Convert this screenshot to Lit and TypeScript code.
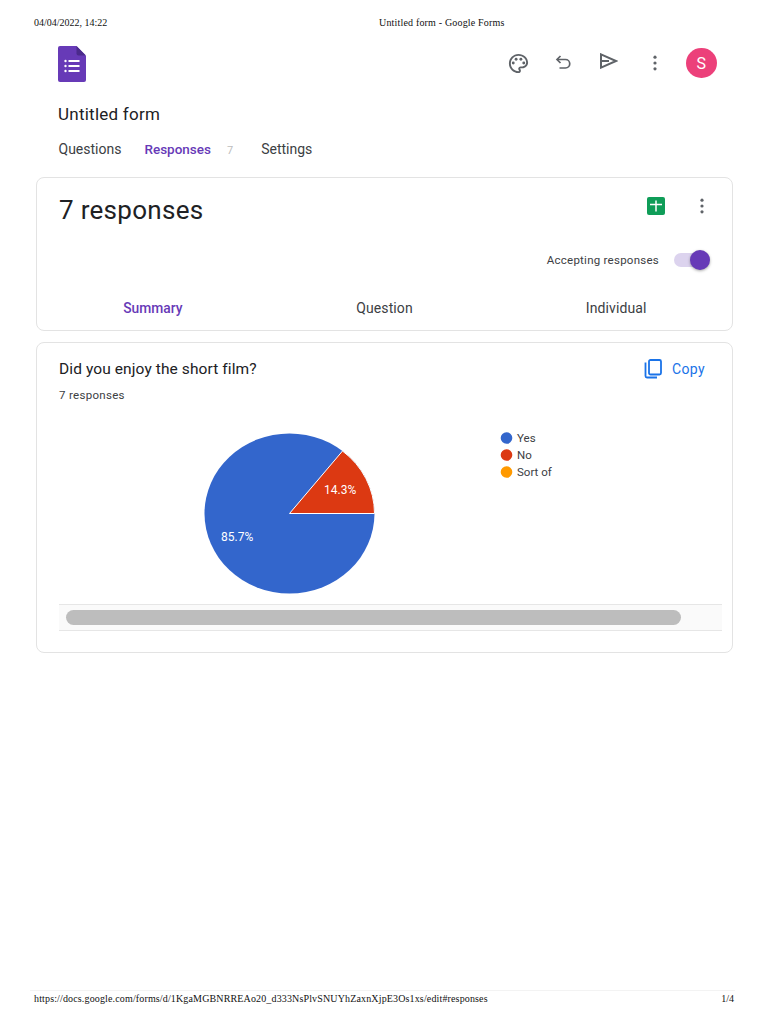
import { LitElement, html, css } from "lit";
import { customElement } from "lit/decorators.js";

const dots = html`<svg class="dots" width="4" height="16" viewBox="0 0 4 16"><circle cx="2" cy="2.2" r="1.6"/><circle cx="2" cy="8" r="1.6"/><circle cx="2" cy="13.8" r="1.6"/></svg>`;

@customElement("app-root")
export class AppRoot extends LitElement {
  static styles = css`
    :host { display: block; width: 768px; height: 1024px; background: #fff; font-family: Roboto, "Noto Sans", sans-serif; color: #202124; overflow: hidden; }
    .page { width: 768px; height: 1024px; display: flex; flex-direction: column; box-sizing: border-box; }
    .print { font-family: "Liberation Serif", serif; font-size: 10px; color: #111; }
    .head { display: grid; grid-template-columns: 345px auto; padding: 17px 34px 0; height: 29px; box-sizing: border-box; line-height: 12px; }
    .head .t { letter-spacing: 0.18px; }
    .topbar { display: flex; justify-content: space-between; align-items: flex-start; padding: 0 51.5px 0 58px; height: 53px; }
    .logo { margin-top: 17px; display: block; }
    .actions { display: flex; align-items: center; height: 36px; margin-top: 16px; }
    .actions svg { display: block; flex: none; }
    .palette { margin-right: 25.5px; }
    .undo { margin-right: 29px; }
    .send { margin-right: 35px; margin-bottom: 4px; }
    .dots { fill: #5f6368; }
    .more { margin-right: 29px; }
    .avatar { width: 30.5px; height: 30px; border-radius: 50%; background: #ec407a; color: #fff; font-size: 16px; display: flex; align-items: center; justify-content: center; }
    .title { font-size: 17px; line-height: 22px; padding: 21px 0 0 58px; letter-spacing: 0.25px; color: #202124; }
    .tabs { display: flex; align-items: baseline; padding: 14px 0 0 58.5px; font-size: 14px; line-height: 20px; color: #3c4043; height: 20px; box-sizing: content-box; }
    .tabs .on { color: #673ab7; font-weight: 500; font-size: 13.5px; margin-left: 23px; }
    .tabs .n { color: #bdbdbd; font-size: 11px; margin-left: 16px; }
    .tabs .s { margin-left: 28px; }
    .card { margin: 0 35px 0 36px; border: 1.5px solid #e3e3e3; border-radius: 8px; box-sizing: border-box; background: #fff; }
    .c1 { height: 154px; padding: 0 22px; display: flex; flex-direction: column; margin-top: 17.5px; }
    .row1 { display: flex; justify-content: space-between; align-items: flex-start; height: 67.5px; }
    .big { font-size: 26px; line-height: 32px; padding-top: 16px; letter-spacing: 0.3px; }
    .row1 .tools { display: flex; align-items: center; gap: 35px; padding: 19px 6px 0 0; }
    .sheet { width: 18px; height: 18px; border-radius: 2px; background: #0f9d58; display: block; }
    .accept { display: flex; justify-content: flex-end; align-items: center; gap: 15px; font-size: 11.5px; letter-spacing: 0.25px; color: #3c4043; height: 30px; }
    .switch { position: relative; width: 36px; height: 20px; flex: none; }
    .track { position: absolute; left: 0; top: 3px; width: 34px; height: 14px; border-radius: 7px; background: #dcd3ee; }
    .thumb { position: absolute; right: 0; top: 0; width: 20px; height: 20px; border-radius: 50%; background: #673ab7; box-shadow: 0 1px 3px rgba(0,0,0,.35); }
    .rtabs { display: grid; grid-template-columns: repeat(3, 1fr); margin: 22.5px -22px 0; font-size: 14px; letter-spacing: 0.1px; line-height: 20px; text-align: center; color: #3c4043; }
    .rtabs .on { color: #673ab7; font-weight: 500; font-size: 13.8px; letter-spacing: 0; }
    .c2 { height: 311.5px; margin-top: 11px; padding: 0 0 0 22px; }
    .qrow { display: flex; justify-content: space-between; align-items: center; padding: 14px 27px 0 0; height: 24px; box-sizing: content-box; }
    .q { font-size: 15.5px; line-height: 24px; letter-spacing: 0.1px; }
    .copy { display: flex; align-items: center; gap: 10px; color: #1a73e8; font-size: 14px; letter-spacing: 0.4px; }
    .copy svg { display: block; }
    .count { font-size: 11.5px; letter-spacing: 0.3px; color: #3c4043; line-height: 16px; margin: 6px 0 1.5px; }
    .chart { display: block; margin-left: -23px; }
    .chart text { font-family: Roboto, sans-serif; font-size: 11.5px; }
    .chart .pct { font-size: 12px; }
    .scroll { height: 27px; margin: 0 10px 0 0; border-top: 1.5px solid #e6e6e6; border-bottom: 1.5px solid #e6e6e6; background: #fafafa; box-sizing: border-box; padding: 5.5px 0 0 6.5px; }
    .bar { width: 615.5px; height: 15px; border-radius: 8px; background: #bdbdbd; }
    .spacer { flex: 1; }
    .foot { display: flex; justify-content: space-between; padding: 0 34px; height: 33px; line-height: 14px; box-sizing: border-box; }
    .foot .u { letter-spacing: 0.145px; }
    .rule { height: 1px; margin: 0 33px 0 30px; background: #f3f3f3; }
    .foot span { margin-top: 1px; }
  `;

  render() {
    return html`<div class="page">
      <div class="head print"><span>04/04/2022, 14:22</span><span class="t">Untitled form - Google Forms</span></div>
      <div class="topbar">
        <svg class="logo" width="28" height="36" viewBox="0 0 28 36">
          <path d="M2 0H18.5L28 10V34a2 2 0 0 1-2 2H2a2 2 0 0 1-2-2V2a2 2 0 0 1 2-2z" fill="#673ab7"/>
          <path d="M18.5 0L28 9.5H20.5a2 2 0 0 1-2-2z" fill="#4b2a8c"/>
          <g fill="#fff"><rect x="10.5" y="14" width="11" height="2"/><rect x="10.5" y="19" width="11" height="2"/><rect x="10.5" y="24" width="11" height="2"/><circle cx="7.5" cy="15" r="1.2"/><circle cx="7.5" cy="20" r="1.2"/><circle cx="7.5" cy="25" r="1.2"/></g>
        </svg>
        <div class="actions">
          <svg class="palette" width="23" height="23" viewBox="0 0 24 24" fill="#5f6368"><path d="M12 2C6.49 2 2 6.49 2 12s4.49 10 10 10c1.38 0 2.5-1.12 2.5-2.5 0-.61-.23-1.2-.64-1.67-.08-.1-.13-.21-.13-.33 0-.28.22-.5.5-.5H16c3.31 0 6-2.69 6-6 0-4.96-4.49-9-10-9zm4 13h-1.77c-1.38 0-2.5 1.12-2.5 2.5 0 .61.22 1.19.63 1.65.06.07.14.19.14.35 0 .28-.22.5-.5.5-4.41 0-8-3.59-8-8s3.59-8 8-8 8 3.14 8 7c0 2.21-1.79 4-4 4z"/><circle cx="6.5" cy="11.5" r="1.5"/><circle cx="9.5" cy="7.5" r="1.5"/><circle cx="14.5" cy="7.5" r="1.5"/><circle cx="17.5" cy="11.5" r="1.5"/></svg>
          <svg class="undo" width="16" height="16" viewBox="0 0 16 16" fill="none" stroke="#5f6368" stroke-width="1.7"><path d="M5.5 1L2 4.5 5.5 8"/><path d="M2.5 4.5h8a4 4 0 0 1 0 8.5H4.5"/></svg>
          <svg class="send" width="18" height="16" viewBox="0 0 18 16" fill="none" stroke="#5f6368" stroke-width="2"><path d="M1 1.4L16 8 1 14.6z"/><path d="M1 8H9"/></svg>
          <span class="more">${dots}</span>
          <div class="avatar">S</div>
        </div>
      </div>
      <div class="title">Untitled form</div>
      <div class="tabs"><span>Questions</span><span class="on">Responses</span><span class="n">7</span><span class="s">Settings</span></div>
      <section class="card c1">
        <div class="row1">
          <div class="big">7 responses</div>
          <div class="tools">
            <svg class="sheet" viewBox="0 0 18 18"><path d="M9 3.5v11M3 7.5h12" stroke="#fff" stroke-width="1.5" fill="none"/></svg>
            ${dots}
          </div>
        </div>
        <div class="accept"><span>Accepting responses</span><div class="switch"><div class="track"></div><div class="thumb"></div></div></div>
        <div class="rtabs"><span class="on">Summary</span><span>Question</span><span>Individual</span></div>
      </section>
      <section class="card c2">
        <div class="qrow"><span class="q">Did you enjoy the short film?</span>
          <span class="copy"><svg width="18" height="20" viewBox="0 0 18 20" fill="none" stroke="#1a73e8" stroke-width="1.8"><path d="M1.5 3.5V17a1.5 1.5 0 0 0 1.5 1.5H13"/><rect x="5" y="1" width="12" height="14.5" rx="1.5"/></svg>Copy</span></div>
        <div class="count">7 responses</div>
        <svg class="chart" width="696" height="199.5" viewBox="36 404.5 696 199.5">
          <ellipse cx="289.5" cy="514" rx="85" ry="80" fill="#3366cc"/>
          <path d="M289.5 514L342.5 451.5A85 80 0 0 1 374.5 514z" fill="#dc3912" stroke="#fff" stroke-width="1"/>
          <text class="pct" x="221" y="541" fill="#fff">85.7%</text>
          <text class="pct" x="324" y="494" fill="#fff">14.3%</text>
          <circle cx="506.5" cy="438.5" r="5.8" fill="#3366cc"/><circle cx="506.5" cy="455.5" r="5.8" fill="#dc3912"/><circle cx="506.5" cy="472.5" r="5.8" fill="#ff9900"/>
          <text x="517" y="442" fill="#3c4043">Yes</text><text x="517" y="459" fill="#3c4043">No</text><text x="517" y="476" fill="#3c4043">Sort of</text>
        </svg>
        <div class="scroll"><div class="bar"></div></div>
      </section>
      <div class="spacer"></div>
      <div class="rule"></div>
      <div class="foot print"><span class="u">https://docs.google.com/forms/d/1KgaMGBNRREAo20_d333NsPlvSNUYhZaxnXjpE3Os1xs/edit#responses</span><span>1/4</span></div>
    </div>`;
  }
}
